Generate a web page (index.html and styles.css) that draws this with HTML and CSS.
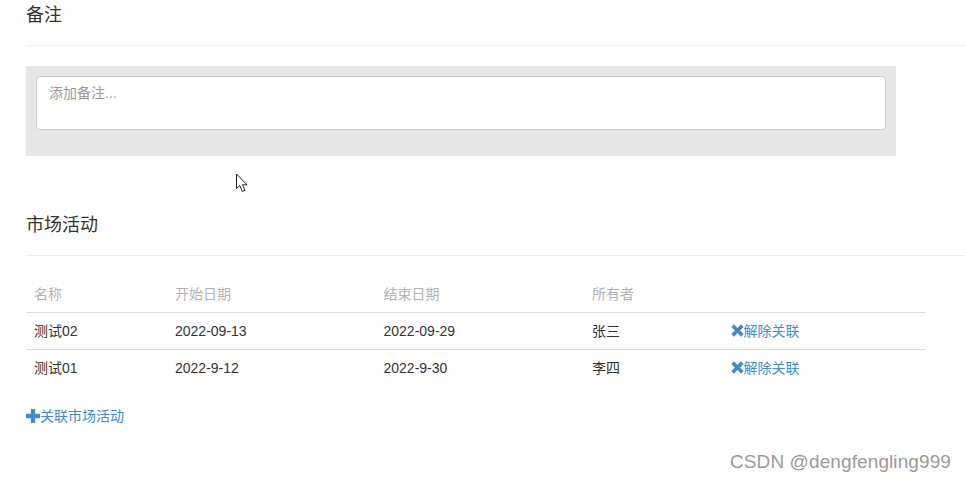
FILE: index.html
```html
<!DOCTYPE html>
<html lang="en">
<head>
  <meta charset="UTF-8">
  <title>备注</title>
  <link rel="stylesheet" href="styles.css">
</head>
<body>
  <section class="remarks">
    <div class="page-header"><h4>备注</h4></div>
    <div class="remark-box">
      <textarea class="remark-input" placeholder="添加备注..."></textarea>
    </div>
  </section>

  <section class="activities">
    <div class="page-header"><h4>市场活动</h4></div>
    <table class="activity-table">
      <colgroup>
        <col class="col-name">
        <col class="col-start">
        <col class="col-end">
        <col class="col-owner">
        <col>
      </colgroup>
      <thead>
        <tr>
          <th>名称</th>
          <th>开始日期</th>
          <th>结束日期</th>
          <th>所有者</th>
          <th></th>
        </tr>
      </thead>
      <tbody>
        <tr>
          <td>测试02</td>
          <td>2022-09-13</td>
          <td>2022-09-29</td>
          <td>张三</td>
          <td>
            <a class="link" href="#">
              <svg class="icon-remove" viewBox="0 0 12 12"><path d="M0.300 2.700 2.700 0.300 6 3.600 9.300 0.300 11.700 2.700 8.400 6 11.700 9.300 9.300 11.700 6 8.400 2.700 11.700 0.300 9.300 3.600 6z"/></svg>解除关联
            </a>
          </td>
        </tr>
        <tr>
          <td>测试01</td>
          <td>2022-9-12</td>
          <td>2022-9-30</td>
          <td>李四</td>
          <td>
            <a class="link" href="#">
              <svg class="icon-remove" viewBox="0 0 12 12"><path d="M0.300 2.700 2.700 0.300 6 3.600 9.300 0.300 11.700 2.700 8.400 6 11.700 9.300 9.300 11.700 6 8.400 2.700 11.700 0.300 9.300 3.600 6z"/></svg>解除关联
            </a>
          </td>
        </tr>
      </tbody>
    </table>
    <a class="link add-link" href="#">
      <svg class="icon-plus" viewBox="0 0 13 13"><path d="M4.500 0V4.500H0V8.500H4.500V13H8.500V8.500H13V4.500H8.500V0z"/></svg>关联市场活动
    </a>
  </section>

  <!-- mouse pointer caught in the capture -->
  <svg class="pointer" viewBox="0 0 14 20"><path d="M1.500 1V15.500L4.800 12.600 7.400 18.500 10 17.300 7.500 11.800H12z" fill="#fff" stroke="#222" stroke-width="1"/></svg>
  <div class="watermark">CSDN @dengfengling999</div>
</body>
</html>
```

FILE: styles.css
```css
html, body {
  height: 100%;
}
body {
  margin: 0;
  padding-left: 26px;
  position: relative;
  overflow: hidden;
  background-color: #fff;
  color: #333;
  font-family: "Liberation Sans", "Noto Sans CJK SC", sans-serif;
  font-size: 14px;
  line-height: 20px;
}
.page-header {
  height: 45px;
  border-bottom: 1px solid #eee;
}
.page-header h4 {
  margin: 0;
  font-size: 18px;
  font-weight: normal;
  line-height: 30px;
}
.remark-box {
  width: 850px;
  height: 70px;
  margin-top: 20px;
  padding: 10px;
  background-color: #e6e6e6;
}
.remark-input {
  display: block;
  box-sizing: border-box;
  width: 100%;
  height: 54px;
  padding: 6px 12px;
  border: 1px solid #ccc;
  border-radius: 4px;
  background-color: #fff;
  font: inherit;
  resize: none;
}
.remark-input::placeholder {
  color: #999;
  opacity: 1;
}
.activities {
  margin-top: 54px;
}
.activity-table {
  width: 900px;
  margin-top: 20px;
  border-collapse: collapse;
  table-layout: fixed;
}
.col-name {
  width: 141px;
}
.col-start,
.col-end {
  width: 208.5px;
}
.col-owner {
  width: 139.5px;
}
.activity-table th {
  height: 36px;
  padding: 0 8px;
  color: #b3b3b3;
  font-weight: normal;
  text-align: left;
  border-bottom: 1px solid #ddd;
}
.activity-table td {
  height: 36px;
  padding: 0 8px;
  border-bottom: 1px solid #ddd;
}
.activity-table tbody tr:last-child td {
  border-bottom: none;
}
.link {
  color: #428bca;
  text-decoration: none;
  white-space: nowrap;
}
.icon-remove {
  width: 13px;
  height: 13px;
  margin-left: -1px;
  fill: #428bca;
  vertical-align: -1px;
}
.icon-plus {
  width: 14px;
  height: 14px;
  fill: #428bca;
  vertical-align: -2px;
}
.add-link {
  display: block;
  margin-top: 20px;
}
.pointer {
  position: absolute;
  left: 235px;
  top: 173px;
  width: 14px;
  height: 20px;
}
.watermark {
  position: absolute;
  left: 730px;
  top: 450px;
  color: #9a9a9a;
  font-size: 19px;
  letter-spacing: 0.1px;
  line-height: 24px;
  white-space: nowrap;
}
```
